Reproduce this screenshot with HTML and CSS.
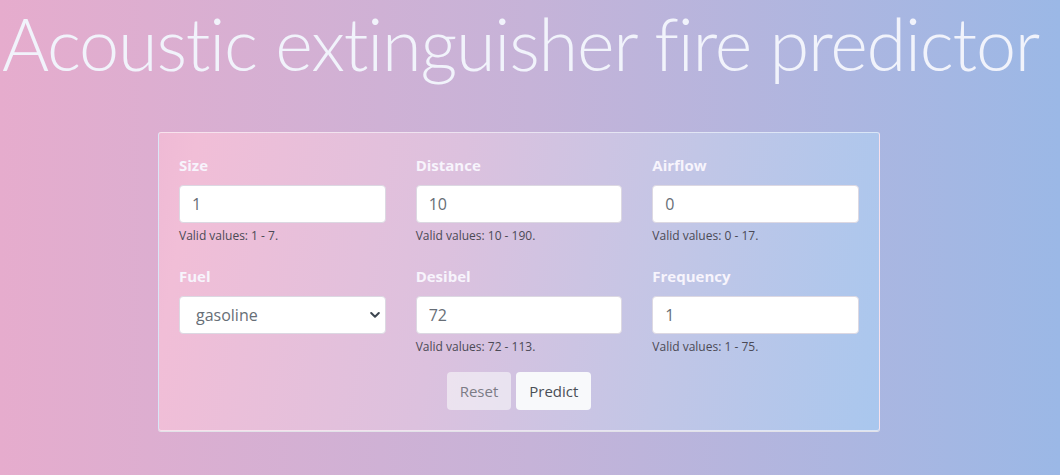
FILE: index.html
```html
<!DOCTYPE html>
<html lang="en">
<head>
<meta charset="utf-8">
<title>Acoustic extinguisher fire predictor</title>
<link rel="stylesheet" href="styles.css">
</head>
<body>
<h1 class="title">Acoustic extinguisher fire predictor</h1>
<form class="card">
  <div class="grid">
    <div class="group">
      <label class="label" for="size">Size</label>
      <input class="control" id="size" type="text" value="1">
      <small class="help">Valid values: 1 - 7.</small>
    </div>
    <div class="group">
      <label class="label" for="distance">Distance</label>
      <input class="control" id="distance" type="text" value="10">
      <small class="help">Valid values: 10 - 190.</small>
    </div>
    <div class="group">
      <label class="label" for="airflow">Airflow</label>
      <input class="control" id="airflow" type="text" value="0">
      <small class="help">Valid values: 0 - 17.</small>
    </div>
    <div class="group">
      <label class="label" for="fuel">Fuel</label>
      <div class="select-wrap">
        <select class="control select" id="fuel">
          <option>gasoline</option>
          <option>kerosene</option>
          <option>lpg</option>
          <option>thinner</option>
        </select>
        <svg class="chevron" width="10" height="8" viewBox="0 0 10 8"><path d="M1.2 2 L5 5.8 L8.8 2" fill="none" stroke="#3d4650" stroke-width="2" stroke-linecap="round" stroke-linejoin="round"/></svg>
      </div>
    </div>
    <div class="group">
      <label class="label" for="desibel">Desibel</label>
      <input class="control" id="desibel" type="text" value="72">
      <small class="help">Valid values: 72 - 113.</small>
    </div>
    <div class="group">
      <label class="label" for="frequency">Frequency</label>
      <input class="control" id="frequency" type="text" value="1">
      <small class="help">Valid values: 1 - 75.</small>
    </div>
  </div>
  <div class="actions">
    <button type="button" class="btn btn-reset">Reset</button>
    <button type="button" class="btn btn-predict">Predict</button>
  </div>
</form>
</body>
</html>
```
FILE: styles.css
```css
html, body {
  margin: 0;
  padding: 0;
}
body {
  min-height: 475px;
  background: linear-gradient(90deg, #e6accd 0%, #c6b3d8 50%, #9bb8e6 100%);
  font-family: "Open Sans", "Noto Sans", sans-serif;
  font-size: 16px;
  line-height: 1.5;
  color: #212529;
}
.title {
  margin: 0;
  padding-left: 2px;
  font-family: Lato, "Open Sans", sans-serif;
  font-weight: 300;
  font-size: 72px;
  line-height: 86px;
  letter-spacing: -1.2px;
  font-variant-ligatures: none;
  font-feature-settings: "liga" 0, "dlig" 0;
  color: #f1f3fb;
  white-space: nowrap;
}
.card {
  box-sizing: border-box;
  width: 722px;
  margin: 46px 0 0 158px;
  padding: 20px;
  border: 1px solid rgba(255, 255, 255, 0.55);
  border-radius: 3px;
  box-shadow: 0 1px 0 #e2e2e8;
  background: linear-gradient(100deg, #efbad5 0%, #f1bed7 5%, #dcc1de 40%, #c2c6e6 70%, #a9c7ee 100%);
}
.grid {
  display: grid;
  grid-template-columns: repeat(3, 1fr);
  column-gap: 30px;
  row-gap: 3px;
  align-items: start;
}
.group {
  display: flex;
  flex-direction: column;
  margin-bottom: 16px;
}
.label {
  font-weight: 700;
  font-size: 15px;
  line-height: 24px;
  color: #f7f4fc;
  margin-bottom: 8px;
}
.control {
  box-sizing: border-box;
  width: 100%;
  height: 38px;
  padding: 6px 12px;
  border: 1px solid #dcd8e2;
  border-radius: 4px;
  background: #fff;
  font-family: inherit;
  font-size: 16px;
  line-height: 24px;
  color: #676e76;
  outline: none;
}
.select-wrap {
  position: relative;
}
.select {
  appearance: none;
  -webkit-appearance: none;
  padding-left: 16px;
  padding-right: 30px;
}
.chevron {
  position: absolute;
  right: 6px;
  top: 15px;
  pointer-events: none;
}
.help {
  margin-top: 4px;
  font-size: 12px;
  line-height: 18px;
  color: #4b4a55;
}
.actions {
  display: flex;
  justify-content: center;
  gap: 5px;
}
.btn {
  height: 38px;
  padding: 6px 12px;
  border: 1px solid transparent;
  border-radius: 4px;
  font-family: inherit;
  font-size: 15px;
  line-height: 24px;
  cursor: pointer;
}
.btn-reset {
  background: rgba(248, 249, 250, 0.6);
  color: #7c7c86;
}
.btn-predict {
  background: #f8f9fb;
  color: #4a4f56;
}
```
